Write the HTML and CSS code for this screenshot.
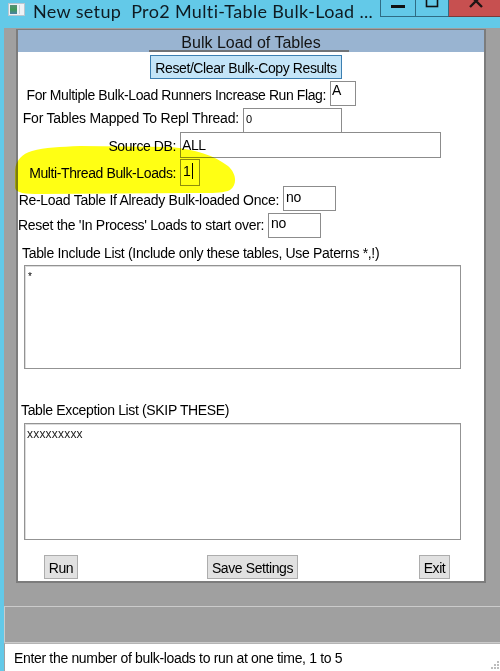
FILE: index.html
```html
<!DOCTYPE html>
<html>
<head>
<meta charset="utf-8">
<title>New setup Pro2 Multi-Table Bulk-Load</title>
<link rel="stylesheet" href="styles.css">
</head>
<body>
<header class="titlebar">
  <svg class="app-icon" viewBox="0 0 17 13" aria-hidden="true">
    <defs>
      <linearGradient id="ig" x1="0" y1="0" x2="0" y2="1">
        <stop offset="0" stop-color="#5a8f7a"/>
        <stop offset="0.5" stop-color="#3f9a58"/>
        <stop offset="1" stop-color="#4d7fa8"/>
      </linearGradient>
    </defs>
    <rect x="0" y="0" width="17" height="13" fill="#b9c6cf"/>
    <rect x="1" y="1" width="15" height="11" fill="#eef2f5"/>
    <rect x="2" y="2" width="7" height="9" fill="url(#ig)"/>
    <rect x="11" y="2" width="1" height="9" fill="#c9d3da"/>
  </svg>
  <div class="title">New setup  Pro2 Multi-Table Bulk-Load ...</div>
  <div class="caption">
    <div class="cap-btn cap-min">
      <svg viewBox="0 0 34 16" aria-hidden="true"><rect x="10" y="5" width="14" height="3" fill="#111"/></svg>
    </div>
    <div class="cap-btn cap-max">
      <svg viewBox="0 0 32 16" aria-hidden="true"><rect x="10.5" y="-3" width="11" height="9.5" fill="none" stroke="#111" stroke-width="1.6"/><rect x="10" y="-3" width="12" height="3" fill="#111"/></svg>
    </div>
    <div class="cap-btn cap-close">
      <svg viewBox="0 0 51 16" aria-hidden="true"><path d="M21 -5 L33 7 M33 -5 L21 7" stroke="#1d1414" stroke-width="2.4"/></svg>
    </div>
  </div>
</header>

<div class="frame">
  <div class="client">
    <section class="panel">
      <div class="panel-head">Bulk Load of Tables</div>
      <div class="panel-body">
        <button class="reset">Reset/Clear Bulk-Copy Results</button>

        <div class="row r1">
          <span class="lbl">For Multiple Bulk-Load Runners Increase Run Flag:</span>
          <div class="field">A</div>
        </div>
        <div class="row r2">
          <span class="lbl">For Tables Mapped To Repl Thread:</span>
          <div class="field">0</div>
        </div>
        <div class="row r3">
          <span class="lbl">Source DB:</span>
          <div class="field">ALL</div>
        </div>
        <div class="row r4">
          <span class="lbl">Multi-Thread Bulk-Loads:</span>
          <div class="field">1<span class="caret"></span></div>
        </div>
        <div class="row r5">
          <span class="lbl">Re-Load Table If Already Bulk-loaded Once:</span>
          <div class="field">no</div>
        </div>
        <div class="row r6">
          <span class="lbl">Reset the 'In Process' Loads to start over:</span>
          <div class="field">no</div>
        </div>

        <div class="list-label ll1">Table Include List (Include only these tables, Use Paterns *,!)</div>
        <div class="list-box lb1">*</div>

        <div class="list-label ll2">Table Exception List (SKIP THESE)</div>
        <div class="list-box lb2">xxxxxxxxx</div>

        <div class="actions">
          <button class="btn btn-run">Run</button>
          <button class="btn btn-save">Save Settings</button>
          <button class="btn btn-exit">Exit</button>
        </div>
      </div>
    </section>
  </div>
  <div class="band"></div>
  <footer class="status">
    <span class="status-text">Enter the number of bulk-loads to run at one time, 1 to 5</span>
    <svg class="grip" viewBox="0 0 11 11" aria-hidden="true">
      <g fill="#bdbdbd">
        <rect x="8" y="1" width="2" height="2"/>
        <rect x="5" y="4" width="2" height="2"/><rect x="8" y="4" width="2" height="2"/>
        <rect x="2" y="7" width="2" height="2"/><rect x="5" y="7" width="2" height="2"/><rect x="8" y="7" width="2" height="2"/>
      </g>
    </svg>
  </footer>
</div>

<svg class="highlight" viewBox="0 140 250 60" aria-hidden="true">
  <path d="M15,170 C16,160 22,154 32,151 C45,147 60,147 80,146 L170,147 C195,149 215,156 228,166 C236,173 238,184 230,190 C222,194 205,193 190,193 L40,194 C25,194 16,193 15,188 Z" fill="#ffff14"/>
</svg>
</body>
</html>
```

FILE: styles.css
```css
* { box-sizing: border-box; }

body {
  margin: 0;
  width: 500px;
  height: 671px;
  overflow: hidden;
  position: relative;
  background: #63c9e8;
  font-family: "Liberation Sans", Arial, sans-serif;
  font-size: 14px;
  letter-spacing: -0.4px;
  color: #000;
}

/* ---------- title bar ---------- */
.titlebar {
  height: 28px;
  display: flex;
  align-items: flex-start;
}
.app-icon {
  flex: none;
  width: 17px;
  height: 13px;
  margin: 3px 0 0 8px;
}
.title {
  flex: none;
  margin: 0 0 0 8px;
  font-family: "Lato", "Open Sans", sans-serif;
  font-size: 18px;
  line-height: 22px;
  letter-spacing: 0.35px;
  white-space: pre;
  color: #0f1b22;
}
.caption {
  margin-left: auto;
  display: flex;
  height: 17px;
}
.cap-btn {
  height: 17px;
  border-left: 1px solid #2f6c84;
  border-bottom: 1px solid #2f6c84;
}
.cap-btn svg { display: block; width: 100%; height: 16px; }
.cap-min { width: 35px; }
.cap-max { width: 33px; }
.cap-close { width: 52px; background: #c75050; border-bottom-color: #7a3a3a; }

/* ---------- window frame ---------- */
.frame {
  margin-left: 4px;
  height: 643px;
  display: flex;
  flex-direction: column;
}
.client {
  flex: none;
  height: 578px;
  background: #a0a0a0;
  padding: 1px 0 0 12px;
}
.panel {
  width: 470px;
  height: 554px;
  background: #fff;
  border: 2px solid #7c7c7c;
  border-top-width: 1px;
  display: flex;
  flex-direction: column;
}
.panel-head {
  flex: none;
  position: relative;
  height: 22px;
  padding-top: 3px;
  background: #99b4d1;
  text-align: center;
  font-size: 16px;
  line-height: 20px;
  letter-spacing: 0;
  color: #141414;
}
.panel-head::after {
  content: "";
  position: absolute;
  left: 131px;
  bottom: 0;
  width: 200px;
  height: 2px;
  background: #6f7377;
}
.panel-body {
  flex: 1;
  display: flex;
  flex-direction: column;
  align-items: flex-start;
}

.reset {
  flex: none;
  margin: 3px 0 0 132px;
  width: 192px;
  height: 24px;
  padding: 1px 0 0;
  background: #c4e5f8;
  border: 1px solid #3c7fb1;
  font: inherit;
  letter-spacing: inherit;
  line-height: 16px;
  color: #000;
  text-align: center;
}

/* ---------- label + field rows ---------- */
.row {
  flex: none;
  display: flex;
  align-items: flex-start;
}
.lbl {
  flex: none;
  text-align: right;
  line-height: 16px;
  white-space: nowrap;
}
.field {
  flex: none;
  margin-left: 4px;
  background: #fff;
  border: 1px solid #8c8c8c;
  line-height: 16px;
  white-space: nowrap;
}

.r1 { margin-top: 2px; height: 27px; }
.r1 .lbl { width: 308px; padding-top: 6px; }
.r1 .field { width: 26px; height: 25px; padding: 0 0 0 1px; }

.r2 { height: 24px; }
.r2 .lbl { width: 221px; padding-top: 2px; letter-spacing: -0.19px; }
.r2 .field { width: 99px; height: 25px; padding: 4px 0 0 2px; font-size: 11px; line-height: 12px; letter-spacing: 0; }

.r3 { height: 27px; }
.r3 .lbl { width: 158px; padding-top: 6px; }
.r3 .field { width: 261px; height: 26px; padding: 4px 0 0 1px; }

.r4 { height: 27px; }
.r4 .lbl { width: 158px; padding-top: 6px; }
.r4 .field { width: 20px; height: 27px; padding: 3px 0 0 2px; }
.caret {
  display: inline-block;
  vertical-align: top;
  width: 1px;
  height: 16px;
  margin-left: 2px;
  background: #000;
}

.r5 { height: 27px; }
.r5 .lbl { width: 261px; padding-top: 6px; letter-spacing: -0.28px; }
.r5 .field { width: 53px; height: 25px; padding: 2px 0 0 2px; }

.r6 { height: 27px; }
.r6 .lbl { width: 246px; padding-top: 4px; letter-spacing: -0.3px; }
.r6 .field { width: 53px; height: 25px; padding: 1px 0 0 2px; }

/* ---------- lists ---------- */
.list-label {
  flex: none;
  line-height: 16px;
  white-space: nowrap;
}
.ll1 { margin: 5px 0 0 4px; letter-spacing: -0.32px; }
.ll2 { margin: 33px 0 0 3px; letter-spacing: -0.35px; }

.list-box {
  flex: none;
  width: 437px;
  margin-left: 6px;
  background: #fff;
  border: 1px solid #939393;
  box-shadow: inset 1px 1px 0 #dcdcdc;
}
.lb1 {
  margin-top: 4px;
  height: 104px;
  padding: 5px 0 0 3px;
  font-size: 10px;
  line-height: 12px;
  letter-spacing: 0;
}
.lb2 {
  margin-top: 5px;
  height: 117px;
  padding: 3px 0 0 2px;
  font-size: 12px;
  line-height: 14px;
  letter-spacing: 0.2px;
  color: #222;
}

/* ---------- buttons ---------- */
.actions {
  flex: none;
  display: flex;
  margin-top: 15px;
  height: 24px;
}
.btn {
  flex: none;
  height: 24px;
  padding: 2px 0 0;
  background: #e1e1e1;
  border: 1px solid #adadad;
  font: inherit;
  letter-spacing: inherit;
  line-height: 16px;
  color: #000;
  text-align: center;
}
.btn-run { margin-left: 26px; width: 34px; }
.btn-save { margin-left: 129px; width: 91px; }
.btn-exit { margin-left: 121px; width: 31px; }

/* ---------- bottom band + status ---------- */
.band {
  flex: none;
  height: 37px;
  background: #a0a0a0;
  border-top: 1px solid #cbcbcb;
  border-bottom: 1px solid #cbcbcb;
  border-left: 1px solid #cbcbcb;
}
.status {
  flex: 1;
  display: flex;
  background: #fff;
  border-left: 1px solid #a0a0a0;
  border-top: 1px solid #b4b4b4;
  padding: 6px 0 0 9px;
}
.status-text {
  line-height: 16px;
  white-space: nowrap;
  letter-spacing: -0.33px;
}
.grip {
  margin-left: auto;
  align-self: flex-end;
  width: 11px;
  height: 11px;
}

/* ---------- marker highlight ---------- */
.highlight {
  position: absolute;
  left: 0;
  top: 140px;
  width: 250px;
  height: 60px;
  pointer-events: none;
  mix-blend-mode: multiply;
}
```
